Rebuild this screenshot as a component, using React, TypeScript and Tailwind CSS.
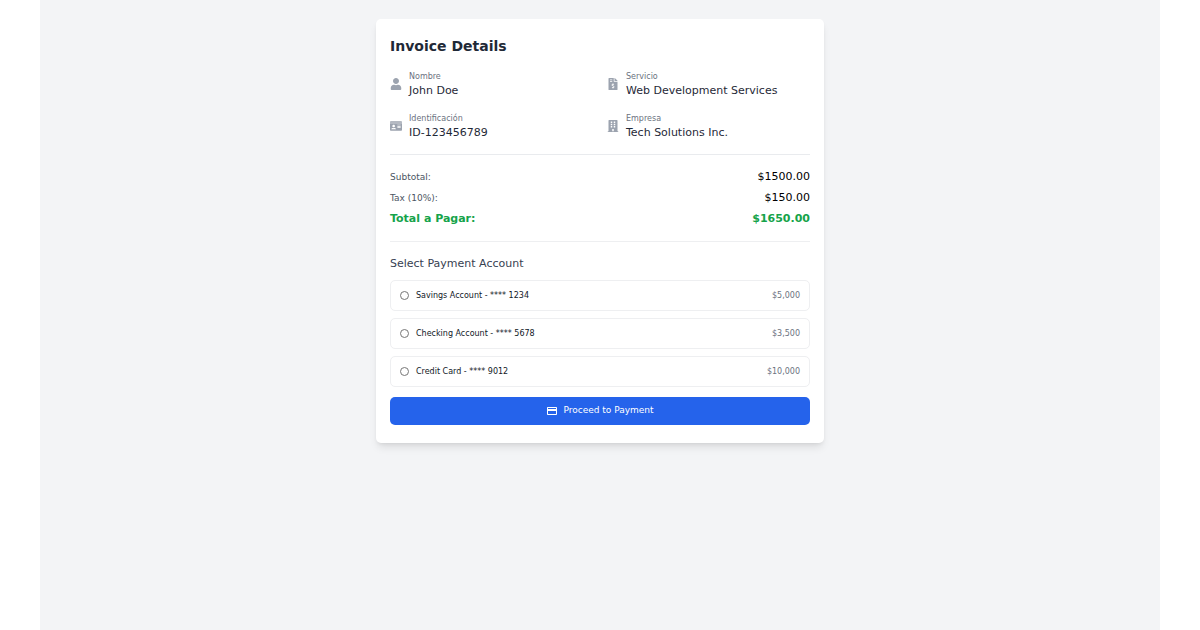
import { useState } from "react";
import type { FormEvent } from "react";
import type { IconType } from "react-icons";
import { FaBuilding, FaFileInvoiceDollar, FaIdCard, FaUser } from "react-icons/fa";
import { MdPayment } from "react-icons/md";

const invoice = {
  name: "John Doe",
  service: "Web Development Services",
  identification: "ID-123456789",
  company: "Tech Solutions Inc.",
  subtotal: 1500,
  tax: 150,
};

const accounts = [
  { id: "savings", name: "Savings Account - **** 1234", balance: 5000 },
  { id: "checking", name: "Checking Account - **** 5678", balance: 3500 },
  { id: "credit", name: "Credit Card - **** 9012", balance: 10000 },
];

function Detail({ icon: Icon, label, value }: { icon: IconType; label: string; value: string }) {
  return (
    <div className="flex items-center gap-[7px]">
      <Icon className="size-3 shrink-0 text-[#9ca3af]" />
      <div>
        <p className="text-[8px] leading-3.5 text-[#6b7280]">{label}</p>
        <p className="text-[11px] leading-3.5 text-[#1f2937]">{value}</p>
      </div>
    </div>
  );
}

function AmountRow({ label, amount }: { label: string; amount: number }) {
  return (
    <div className="flex items-center justify-between leading-4">
      <span className="text-[9px] text-[#4b5563]">{label}</span>
      <span className="text-[11px] text-black">${amount.toFixed(2)}</span>
    </div>
  );
}

export default function App() {
  const [selected, setSelected] = useState("");

  const handleSubmit = (e: FormEvent) => {
    e.preventDefault();
  };

  return (
    <main className="mx-10 min-h-screen bg-[#f3f4f6] py-[19px] font-['DejaVu_Sans',sans-serif]">
      <div className="mx-auto max-w-md rounded-[5px] bg-white px-3.5 py-[18px] shadow-[0_6px_9px_-2px_rgba(0,0,0,0.1),0_2px_4px_-2px_rgba(0,0,0,0.1)]">
        <h1 className="mb-3.5 text-[14px] leading-[19px] font-bold text-[#1f2937]">
          Invoice Details
        </h1>

        <div className="grid grid-cols-2 gap-3.5">
          <Detail icon={FaUser} label="Nombre" value={invoice.name} />
          <Detail icon={FaFileInvoiceDollar} label="Servicio" value={invoice.service} />
          <Detail icon={FaIdCard} label="Identificación" value={invoice.identification} />
          <Detail icon={FaBuilding} label="Empresa" value={invoice.company} />
        </div>

        <div className="mt-3.5 flex flex-col gap-[5px] border-t border-[#e9ebee] pt-3.5">
          <AmountRow label="Subtotal:" amount={invoice.subtotal} />
          <AmountRow label="Tax (10%):" amount={invoice.tax} />
          <div className="flex items-center justify-between text-[11px] leading-4 font-bold text-[#16a34a]">
            <span>Total a Pagar:</span>
            <span>${(invoice.subtotal + invoice.tax).toFixed(2)}</span>
          </div>
        </div>

        <form onSubmit={handleSubmit} className="mt-3.5 border-t border-[#eeeff1] pt-3.5">
          <fieldset>
            <legend className="mb-2 text-[11px] leading-4 text-[#374151]">
              Select Payment Account
            </legend>
            <div className="flex flex-col gap-[7px]">
              {accounts.map((account) => (
                <label
                  key={account.id}
                  className="flex cursor-pointer items-center gap-[7px] rounded-[5px] border border-[#eeeff1] p-[9px] text-[8px] leading-[11px]"
                >
                  <input
                    type="radio"
                    name="account"
                    value={account.id}
                    checked={selected === account.id}
                    onChange={() => setSelected(account.id)}
                    className="size-[9px]"
                  />
                  <span className="flex-1 text-[#111827]">{account.name}</span>
                  <span className="text-[#6b7280]">${account.balance.toLocaleString("en-US")}</span>
                </label>
              ))}
            </div>
          </fieldset>

          <button
            type="submit"
            className="mt-2.5 flex h-7 w-full cursor-pointer items-center justify-center gap-[5px] rounded-[5px] bg-[#2563eb] text-[9px] text-white hover:bg-[#1d4ed8]"
          >
            <MdPayment className="size-3" />
            <span>Proceed to Payment</span>
          </button>
        </form>
      </div>
    </main>
  );
}
